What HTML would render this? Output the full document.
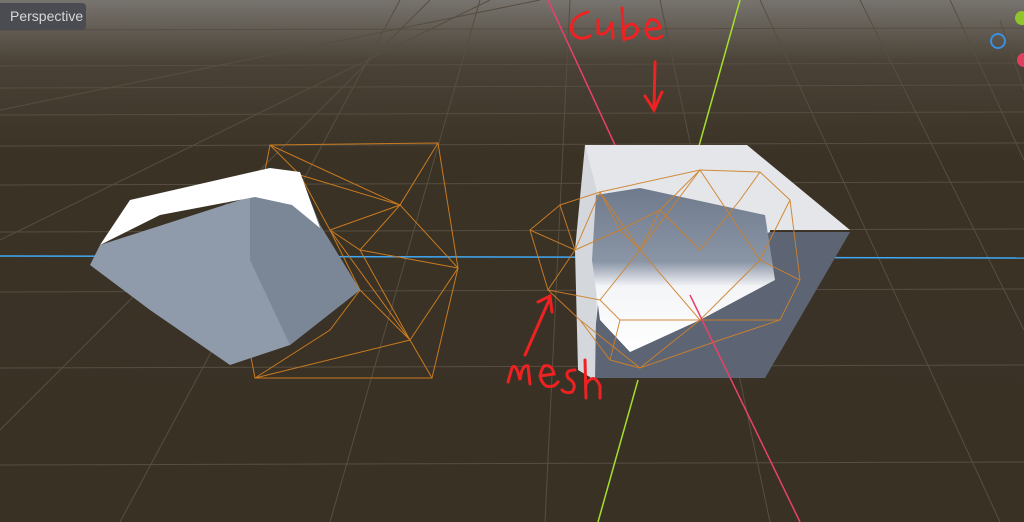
<!DOCTYPE html><html><head><style>body{margin:0;width:1024px;height:522px;overflow:hidden;background:#3b3226}
.lbl{position:absolute;left:0;top:3px;height:27px;width:86px;background:#4a4c52;border-radius:0 4px 4px 0;color:#d8d8d8;font:14px "Liberation Sans",sans-serif;line-height:27px;padding-left:10px;box-sizing:border-box}</style></head><body>
<svg width="1024" height="522" style="position:absolute;left:0;top:0">
<defs><linearGradient id="bg" x1="0" y1="0" x2="0" y2="1"><stop offset="0" stop-color="#77736e"/><stop offset="0.12" stop-color="#4a4236"/><stop offset="0.3" stop-color="#3b3226"/><stop offset="1" stop-color="#3a3125"/></linearGradient>
<linearGradient id="cav" x1="0" y1="0" x2="0" y2="1"><stop offset="0" stop-color="#6f7a8c"/><stop offset="0.45" stop-color="#8a95a6"/><stop offset="0.6" stop-color="#f4f5f8"/><stop offset="1" stop-color="#ffffff"/></linearGradient></defs>
<rect width="1024" height="522" fill="url(#bg)"/>
<g stroke="#574e42" stroke-width="1" fill="none">
<line x1="0" y1="30" x2="1024" y2="28"/><line x1="0" y1="48" x2="1024" y2="45"/><line x1="0" y1="66" x2="1024" y2="63"/><line x1="0" y1="88" x2="1024" y2="85"/><line x1="0" y1="115" x2="1024" y2="112"/><line x1="0" y1="146" x2="1024" y2="143"/><line x1="0" y1="185" x2="1024" y2="182"/><line x1="0" y1="232" x2="1024" y2="229"/><line x1="0" y1="292" x2="1024" y2="289"/><line x1="0" y1="368" x2="1024" y2="365"/><line x1="0" y1="465" x2="1024" y2="462"/>
<line x1="0" y1="110" x2="540" y2="0"/><line x1="0" y1="240" x2="490" y2="0"/><line x1="0" y1="430" x2="430" y2="0"/><line x1="120" y1="522" x2="400" y2="0"/><line x1="330" y1="522" x2="480" y2="0"/><line x1="545" y1="522" x2="570" y2="0"/><line x1="770" y1="522" x2="660" y2="0"/><line x1="1000" y1="522" x2="760" y2="0"/><line x1="1024" y1="330" x2="860" y2="0"/><line x1="1024" y1="160" x2="950" y2="0"/><line x1="1024" y1="90" x2="1000" y2="20"/>
</g>
<line x1="0" y1="256" x2="1024" y2="258" stroke="#3fa9f5" stroke-width="1.5"/>
<line x1="548" y1="0" x2="615" y2="145" stroke="#e8406a" stroke-width="1.5"/>
<line x1="740" y1="0" x2="690" y2="178" stroke="#a4e02a" stroke-width="1.5"/>
<g stroke="#c87a20" stroke-width="1" fill="none">
<polygon points="270,145 438,143 458,268 432,378 255,378 240,300"/>
<polyline points="270,145 300,175 330,230 360,290 330,330 255,378"/><polyline points="438,143 400,205 458,268 410,340 432,378"/><polyline points="300,175 400,205 330,230 410,340 360,290"/><polyline points="270,145 400,205 360,250 458,268"/><polyline points="330,230 360,250 410,340 255,378"/>
</g>
<polygon points="90,265 100,245 240,200 300,175 320,225 360,290 290,345 230,365 150,310" fill="#8f9aab"/>
<polygon points="250,198 300,175 320,225 360,290 290,345 250,260" fill="#7b8697"/>
<polygon points="100,245 130,200 270,168 300,172 320,228 292,205 255,197 160,215" fill="#ffffff"/>
<polygon points="585,145 747,145 850,230 770,230 765,378 590,378" fill="#e4e6ea"/>
<polygon points="590,378 598,305 770,232 850,232 765,378" fill="#5d6574"/>
<polygon points="585,145 598,195 595,380 578,370 575,250" fill="#d4d7dc"/>
<polygon points="596,195 640,188 765,215 775,280 700,320 630,352 600,320 592,260" fill="url(#cav)"/>
<g stroke="#d08028" stroke-width="1" fill="none" opacity="0.9">
<polygon points="530,230 560,205 600,192 700,170 760,172 790,200 800,280 780,320 720,340 640,368 610,360 580,320 548,290"/>
<polyline points="530,230 575,250 600,192 640,250 700,170 760,260 790,200"/><polyline points="548,290 600,300 640,250 700,320 760,260 800,280"/><polyline points="580,320 640,368 700,320 780,320"/><polyline points="560,205 575,250 548,290"/>
<polyline points="600,192 620,230 660,210 700,250 740,200 760,172"/><polyline points="575,250 620,230 640,250 660,210 700,170"/><polyline points="610,360 620,320 600,300 620,320 700,320"/>
</g>
<line x1="690" y1="295" x2="800" y2="522" stroke="#e8406a" stroke-width="1.5"/>
<line x1="638" y1="380" x2="598" y2="522" stroke="#a4e02a" stroke-width="1.5"/>
<g stroke="#ee2222" stroke-width="3" fill="none" stroke-linecap="round">
<path d="M588 12 Q568 18 572 32 Q578 42 590 36"/><path d="M598 20 L598 33 Q606 38 612 22 L613 38"/><path d="M622 8 L624 40 M624 30 Q632 18 638 30 Q634 40 624 38"/><path d="M646 30 L660 28 Q658 18 650 20 Q642 30 650 38 Q658 40 662 36"/>
<path d="M655 62 L654 110 M645 96 L654 110 L662 92"/>
<path d="M525 355 L550 298 M538 302 L550 296 L552 312"/>
<path d="M508 382 L512 368 Q516 362 520 380 Q522 364 528 366 L530 384"/><path d="M540 376 L554 374 Q552 364 544 366 Q536 378 546 386 Q554 388 558 382"/><path d="M575 370 Q564 370 568 378 Q578 384 572 392 Q566 394 562 390"/><path d="M585 360 L586 398 M586 384 Q594 372 600 386 L600 398"/>
</g>
<circle cx="1022" cy="18" r="7" fill="#8fc42a"/><circle cx="998" cy="41" r="7" fill="none" stroke="#3b8fe0" stroke-width="2"/><circle cx="1024" cy="60" r="7" fill="#e04060"/>
</svg>
<div class="lbl">Perspective</div>
</body></html>
